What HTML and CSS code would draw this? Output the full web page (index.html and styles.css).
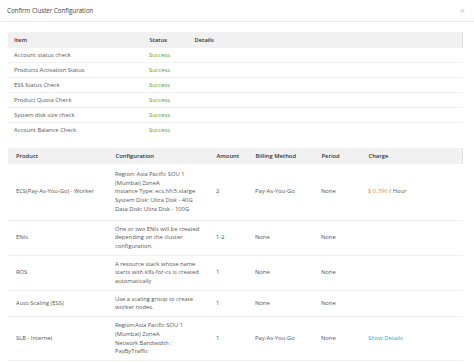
FILE: index.html
```html
<!DOCTYPE html>
<html lang="en">
  <head>
    <meta charset="UTF-8" />
    <title>Confirm Cluster Configuration</title>
    <link rel="stylesheet" href="styles.css">
  </head>
  <body>
    <div class="dialog">
      <div class="dialog-head">
        <span class="title">Confirm Cluster Configuration</span>
        <span class="close">&times;</span>
      </div>
      <div class="dialog-body">
        <table class="check-table">
          <colgroup>
            <col class="c-item">
            <col class="c-status">
            <col>
          </colgroup>
          <thead>
            <tr><th>Item</th><th>Status</th><th>Details</th></tr>
          </thead>
          <tbody>
            <tr><td>Account status check</td><td class="ok">Success</td><td></td></tr>
            <tr><td>Products Activation Status</td><td class="ok">Success</td><td></td></tr>
            <tr><td>ESS Status Check</td><td class="ok">Success</td><td></td></tr>
            <tr><td>Product Quota Check</td><td class="ok">Success</td><td></td></tr>
            <tr><td>System disk size check</td><td class="ok">Success</td><td></td></tr>
            <tr><td>Account Balance Check</td><td class="ok">Success</td><td></td></tr>
          </tbody>
        </table>

        <table class="bill-table">
          <colgroup>
            <col class="c-product">
            <col class="c-config">
            <col class="c-amount">
            <col class="c-billing">
            <col class="c-period">
            <col>
          </colgroup>
          <thead>
            <tr>
              <th>Product</th>
              <th>Configuration</th>
              <th>Amount</th>
              <th>Billing Method</th>
              <th>Period</th>
              <th>Charge</th>
            </tr>
          </thead>
          <tbody>
            <tr class="tall">
              <td>ECS(Pay-As-You-Go) - Worker</td>
              <td>Region: Asia Pacific SOU 1<br>(Mumbai) ZoneA<br>Instance Type: ecs.hfc5.xlarge<br>System Disk: Ultra Disk - 40G<br>Data Disk: Ultra Disk - 100G</td>
              <td>2</td>
              <td>Pay-As-You-Go</td>
              <td>None</td>
              <td><span class="price">$ 0.396</span> / Hour</td>
            </tr>
            <tr>
              <td>ENIs</td>
              <td>One or two ENIs will be created depending on the cluster configuration.</td>
              <td>1-2</td>
              <td>None</td>
              <td>None</td>
              <td></td>
            </tr>
            <tr>
              <td>ROS</td>
              <td>A resource stack whose name starts with k8s-for-cs is created automatically</td>
              <td>1</td>
              <td>None</td>
              <td>None</td>
              <td></td>
            </tr>
            <tr>
              <td>Auto Scaling (ESS)</td>
              <td>Use a scaling group to create worker nodes.</td>
              <td>1</td>
              <td>None</td>
              <td>None</td>
              <td></td>
            </tr>
            <tr>
              <td>SLB - Internet</td>
              <td>Region:Asia Pacific SOU 1<br>(Mumbai) ZoneA<br>Network Bandwidth :<br>PayByTraffic</td>
              <td>1</td>
              <td>Pay-As-You-Go</td>
              <td>None</td>
              <td><a class="link" href="#">Show Details</a></td>
            </tr>
          </tbody>
        </table>
      </div>
    </div>
  </body>
</html>
```

FILE: styles.css
```css
body {
  margin: 0;
  background: #fff;
  font-family: "Open Sans", "Noto Sans", sans-serif;
  color: #555;
}

.dialog {
  width: 474px;
  height: 363px;
  overflow: hidden;
}

.dialog-head {
  display: flex;
  align-items: center;
  justify-content: space-between;
  height: 22px;
  padding: 0 9px 0 7px;
  border-bottom: 1px solid #ececec;
  box-sizing: border-box;
}
.title {
  font-size: 6.2px;
  color: #444;
}
.close {
  font-size: 9px;
  color: #c4c4c4;
  line-height: 1;
}

.dialog-body {
  padding: 10px 11px 0 8px;
}

table {
  width: 100%;
  border-collapse: collapse;
  table-layout: fixed;
  font-size: 5.8px;
}
th {
  text-align: left;
  font-weight: 600;
  color: #333;
  background: #f1f1f1;
  height: 16px;
  padding: 0 6px;
  border-right: 1px solid transparent;
}
th:last-child {
  border-right: 1px solid #e2e2e2;
}
td {
  padding: 0 6px;
  vertical-align: middle;
  border-bottom: 1px solid #f0f0f0;
}

.check-table td {
  height: 14px;
}
.check-table tr:last-child td {
  border-bottom: none;
}
.c-item { width: 135px; }
.c-status { width: 45px; }
.ok { color: #3f9f2f; }

.bill-table {
  margin-top: 11px;
}
.bill-table th,
.bill-table td {
  padding-left: 8px;
  padding-right: 7px;
}
.bill-table td {
  line-height: 8.7px;
  padding-top: 4px;
  padding-bottom: 4px;
}
.bill-table tr.tall td {
  padding-top: 6px;
  padding-bottom: 6px;
}
.c-product { width: 99px; }
.c-config { width: 101px; }
.c-amount { width: 39px; }
.c-billing { width: 66px; }
.c-period { width: 47px; }

.price { color: #f08a2c; }
.link {
  color: #2fa3d8;
  text-decoration: none;
}
```
